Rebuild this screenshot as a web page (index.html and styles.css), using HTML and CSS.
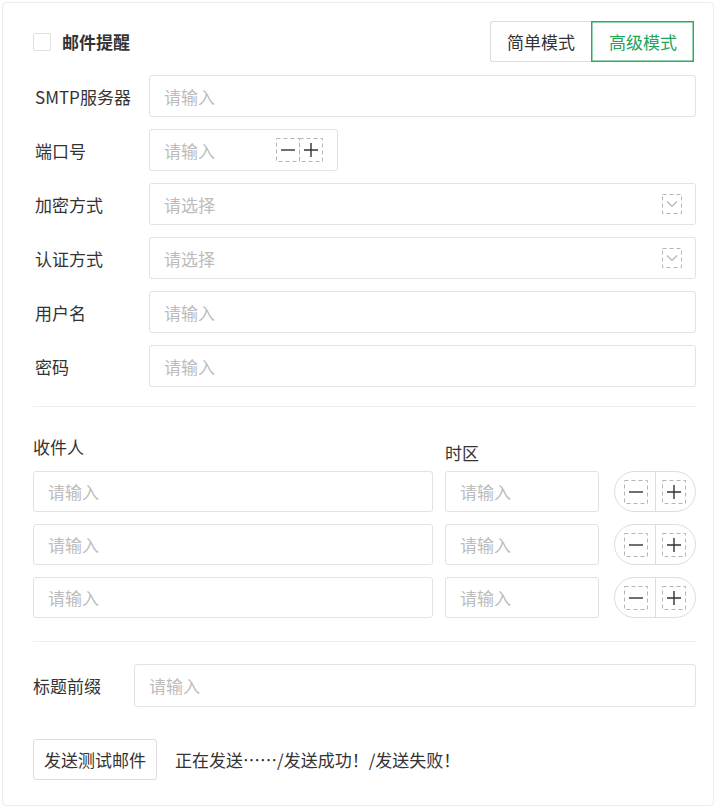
FILE: index.html
```html
<!DOCTYPE html>
<html lang="zh-CN">
<head>
  <meta charset="UTF-8">
  <title>邮件提醒</title>
  <link rel="stylesheet" href="styles.css">
</head>
<body>

  <div class="card">

    <!-- 顶部：开关 + 模式切换 -->
    <div class="header">
      <label class="check">
        <span class="check-box"></span>
        <span class="check-text">邮件提醒</span>
      </label>
      <div class="mode-group">
        <div class="mode-btn">简单模式</div>
        <div class="mode-btn mode-active">高级模式</div>
      </div>
    </div>

    <!-- SMTP 设置 -->
    <div class="form-row">
      <div class="label">SMTP服务器</div>
      <div class="input"><span class="ph">请输入</span></div>
    </div>
    <div class="form-row">
      <div class="label">端口号</div>
      <div class="input port">
        <span class="ph">请输入</span>
        <span class="stepper">
          <svg class="ico" viewBox="0 0 24 24"><rect x="0.5" y="0.5" width="23" height="23" fill="none" stroke="#b5b5b5" stroke-dasharray="4 3"/><path d="M5 12h14" stroke="#333" stroke-width="1.4"/></svg>
          <svg class="ico" viewBox="0 0 24 24"><rect x="0.5" y="0.5" width="23" height="23" fill="none" stroke="#b5b5b5" stroke-dasharray="4 3"/><path d="M5 12h14M12 5v14" stroke="#333" stroke-width="1.4"/></svg>
        </span>
      </div>
    </div>
    <div class="form-row">
      <div class="label">加密方式</div>
      <div class="input sel-input">
        <span class="ph">请选择</span>
        <svg class="ico sel" viewBox="0 0 20 20"><rect x="0.5" y="0.5" width="19" height="19" fill="none" stroke="#b5b5b5" stroke-dasharray="4 3"/><path d="M5 7.5l5 5 5-5" fill="none" stroke="#b5b5b5" stroke-width="1.2"/></svg>
      </div>
    </div>
    <div class="form-row">
      <div class="label">认证方式</div>
      <div class="input sel-input">
        <span class="ph">请选择</span>
        <svg class="ico sel" viewBox="0 0 20 20"><rect x="0.5" y="0.5" width="19" height="19" fill="none" stroke="#b5b5b5" stroke-dasharray="4 3"/><path d="M5 7.5l5 5 5-5" fill="none" stroke="#b5b5b5" stroke-width="1.2"/></svg>
      </div>
    </div>
    <div class="form-row">
      <div class="label">用户名</div>
      <div class="input"><span class="ph">请输入</span></div>
    </div>
    <div class="form-row">
      <div class="label">密码</div>
      <div class="input"><span class="ph">请输入</span></div>
    </div>

    <div class="divider"></div>

    <!-- 收件人列表 -->
    <div class="recv-head">
      <div class="recv-col">收件人</div>
      <div class="tz-col">时区</div>
    </div>

    <div class="recv-row">
      <div class="input recv"><span class="ph">请输入</span></div>
      <div class="input tz"><span class="ph">请输入</span></div>
      <div class="pill">
        <span class="pill-btn"><svg class="ico" viewBox="0 0 24 24"><rect x="0.5" y="0.5" width="23" height="23" fill="none" stroke="#b5b5b5" stroke-dasharray="4 3"/><path d="M5 12h14" stroke="#333" stroke-width="1.4"/></svg></span>
        <span class="pill-btn"><svg class="ico" viewBox="0 0 24 24"><rect x="0.5" y="0.5" width="23" height="23" fill="none" stroke="#b5b5b5" stroke-dasharray="4 3"/><path d="M5 12h14M12 5v14" stroke="#333" stroke-width="1.4"/></svg></span>
      </div>
    </div>
    <div class="recv-row">
      <div class="input recv"><span class="ph">请输入</span></div>
      <div class="input tz"><span class="ph">请输入</span></div>
      <div class="pill">
        <span class="pill-btn"><svg class="ico" viewBox="0 0 24 24"><rect x="0.5" y="0.5" width="23" height="23" fill="none" stroke="#b5b5b5" stroke-dasharray="4 3"/><path d="M5 12h14" stroke="#333" stroke-width="1.4"/></svg></span>
        <span class="pill-btn"><svg class="ico" viewBox="0 0 24 24"><rect x="0.5" y="0.5" width="23" height="23" fill="none" stroke="#b5b5b5" stroke-dasharray="4 3"/><path d="M5 12h14M12 5v14" stroke="#333" stroke-width="1.4"/></svg></span>
      </div>
    </div>
    <div class="recv-row">
      <div class="input recv"><span class="ph">请输入</span></div>
      <div class="input tz"><span class="ph">请输入</span></div>
      <div class="pill">
        <span class="pill-btn"><svg class="ico" viewBox="0 0 24 24"><rect x="0.5" y="0.5" width="23" height="23" fill="none" stroke="#b5b5b5" stroke-dasharray="4 3"/><path d="M5 12h14" stroke="#333" stroke-width="1.4"/></svg></span>
        <span class="pill-btn"><svg class="ico" viewBox="0 0 24 24"><rect x="0.5" y="0.5" width="23" height="23" fill="none" stroke="#b5b5b5" stroke-dasharray="4 3"/><path d="M5 12h14M12 5v14" stroke="#333" stroke-width="1.4"/></svg></span>
      </div>
    </div>

    <div class="divider second"></div>

    <!-- 标题前缀 -->
    <div class="form-row prefix">
      <div class="label">标题前缀</div>
      <div class="input"><span class="ph">请输入</span></div>
    </div>

    <!-- 测试发送 -->
    <div class="send-row">
      <div class="send-btn">发送测试邮件</div>
      <div class="status">正在发送……/发送成功！/发送失败！</div>
    </div>

  </div>

</body>
</html>
```

FILE: styles.css
```css
body {
  margin: 0;
  font-family: "Noto Sans CJK SC", "Noto Sans", sans-serif;
  font-size: 17px;
  line-height: 23px;
  color: #333;
  background: #fff;
}

.card {
  margin: 2px;
  width: 712px;
  height: 804px;
  box-sizing: border-box;
  border: 1px solid #ebebf0;
  border-radius: 4px;
  padding: 18px 17px 0 30px;
}

/* 顶部 */
.header {
  display: flex;
  justify-content: space-between;
  align-items: center;
  padding-right: 2px;
}

.check {
  display: flex;
  align-items: center;
  gap: 11px;
}

.check-box {
  width: 16px;
  height: 16px;
  border: 1px solid #e0e0e6;
  border-radius: 2px;
}

.check-text {
  font-weight: bold;
}

.mode-group {
  display: flex;
}

.mode-btn {
  height: 41px;
  box-sizing: border-box;
  padding: 0 16px;
  display: flex;
  align-items: center;
  border: 1px solid #dcdce2;
}

.mode-btn:first-child {
  border-radius: 3px 0 0 3px;
  border-right: none;
}

.mode-btn.mode-active {
  border: none;
  box-shadow: inset 0 0 0 1.5px #2aaa62;
  color: #22a45c;
  padding: 0 17px 0 18px;
}

/* 表单行 */
.form-row {
  display: flex;
  align-items: center;
  margin-top: 12px;
}

.header + .form-row {
  margin-top: 13px;
}

.label {
  width: 114px;
  padding-left: 2px;
  flex-shrink: 0;
}

.input {
  flex: 1;
  height: 42px;
  box-sizing: border-box;
  border: 1px solid #e1e1e6;
  border-radius: 3px;
  padding: 0 14px;
  display: flex;
  align-items: center;
  justify-content: space-between;
}

.input.sel-input {
  padding-right: 13px;
}

.ph {
  color: #bcbcbc;
}

.input.port {
  flex: 0 0 189px;
}

.stepper {
  display: flex;
}

.stepper .ico + .ico {
  margin-left: -1px;
}

.ico {
  width: 24px;
  height: 24px;
  display: block;
}

.ico.sel {
  width: 20px;
  height: 20px;
}

.divider {
  height: 1px;
  background: #ededf2;
  margin-top: 19px;
}

/* 收件人 */
.recv-head {
  display: flex;
  margin-top: 28px;
}

.recv-col {
  width: 412px;
}

.tz-col {
  margin-top: 6px;
}

.recv-row {
  display: flex;
  align-items: center;
  margin-top: 12px;
}

.recv-head + .recv-row {
  margin-top: 7px;
}

.input.recv {
  flex: 0 0 400px;
  height: 41px;
}

.input.tz {
  flex: 0 0 154px;
  height: 41px;
  margin-left: 12px;
}

.pill {
  margin-left: 15px;
  width: 83px;
  height: 41px;
  box-sizing: border-box;
  border: 1px solid #dcdce2;
  border-radius: 21px;
  display: flex;
}

.pill-btn {
  flex: 1;
  display: flex;
  align-items: center;
  justify-content: center;
}

.pill-btn:first-child {
  border-right: 1px solid #dcdce2;
  padding-left: 3px;
}

.pill-btn:last-child {
  padding-right: 3px;
}

.divider.second {
  margin-top: 23px;
}

.form-row.prefix {
  margin-top: 22px;
}

.form-row.prefix .input {
  height: 43px;
}

.form-row.prefix .label {
  width: 101px;
  padding-left: 0;
}

/* 测试发送 */
.send-row {
  display: flex;
  align-items: center;
  margin-top: 32px;
}

.send-btn {
  height: 41px;
  box-sizing: border-box;
  padding: 0 10px;
  display: flex;
  align-items: center;
  border: 1px solid #dcdce2;
  border-radius: 3px;
}

.status {
  margin-left: 18px;
}
```
